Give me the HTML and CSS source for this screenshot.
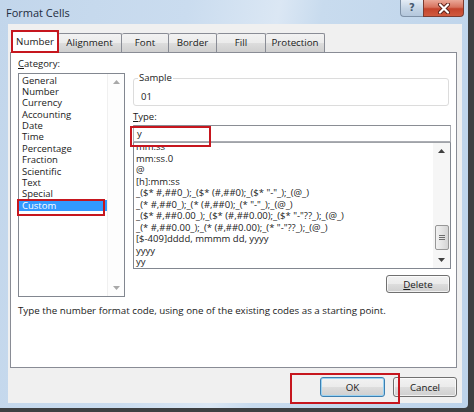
FILE: index.html
```html
<!DOCTYPE html>
<html>
<head>
<meta charset="utf-8">
<link rel="stylesheet" href="styles.css">
</head>
<body>
<div class="window">
  <div class="titlebar">
    <span class="title">Format Cells</span>
    <div class="caption-btns">
      <span class="btn-help">?</span>
      <span class="btn-close">
        <svg width="14" height="11" viewBox="0 0 14 11"><path d="M3 1.5 L11 9.5 M11 1.5 L3 9.5" stroke="#5a2018" stroke-width="4" stroke-linecap="round"/><path d="M3 1.5 L11 9.5 M11 1.5 L3 9.5" stroke="#fff" stroke-width="2.2" stroke-linecap="round"/></svg>
      </span>
    </div>
  </div>
  <div class="client">
    <div class="tabs">
      <div class="tab active w-number">Number</div>
      <div class="tab w-align">Alignment</div>
      <div class="tab w-font">Font</div>
      <div class="tab w-border">Border</div>
      <div class="tab w-fill">Fill</div>
      <div class="tab w-prot">Protection</div>
    </div>
    <div class="panel">
      <div class="cols">
        <div class="leftcol">
          <div class="label"><u>C</u>ategory:</div>
          <div class="listbox">
            <ul class="items cat">
              <li>General</li>
              <li>Number</li>
              <li>Currency</li>
              <li>Accounting</li>
              <li>Date</li>
              <li>Time</li>
              <li>Percentage</li>
              <li>Fraction</li>
              <li>Scientific</li>
              <li>Text</li>
              <li>Special</li>
              <li class="sel">Custom</li>
            </ul>
            <div class="vscroll plain">
              <svg class="arr" width="7" height="4" viewBox="0 0 7 4"><path d="M0 4 L3.5 0 L7 4Z" fill="#a8a8a8"/></svg>
              <div class="track"></div>
              <svg class="arr" width="7" height="4" viewBox="0 0 7 4"><path d="M0 0 L3.5 4 L7 0Z" fill="#a8a8a8"/></svg>
            </div>
          </div>
        </div>
        <div class="rightcol">
          <fieldset class="sample">
            <legend>Sample</legend>
            <div class="sample-val">01</div>
          </fieldset>
          <div class="label type-label"><u>T</u>ype:</div>
          <div class="typeinput">y</div>
          <div class="fmtlist">
            <ul class="items fmt">
              <li>mm:ss</li>
              <li>mm:ss.0</li>
              <li>@</li>
              <li>[h]:mm:ss</li>
              <li>_($* #,##0_);_($* (#,##0);_($* "-"_);_(@_)</li>
              <li>_(* #,##0_);_(* (#,##0);_(* "-"_);_(@_)</li>
              <li>_($* #,##0.00_);_($* (#,##0.00);_($* "-"??_);_(@_)</li>
              <li>_(* #,##0.00_);_(* (#,##0.00);_(* "-"??_);_(@_)</li>
              <li>[$-409]dddd, mmmm dd, yyyy</li>
              <li>yyyy</li>
              <li>yy</li>
            </ul>
            <div class="vscroll active">
              <svg class="arr" width="7" height="4" viewBox="0 0 7 4"><path d="M0 4 L3.5 0 L7 4Z" fill="#404040"/></svg>
              <div class="track">
                <div class="thumb"><span></span><span></span><span></span></div>
              </div>
              <svg class="arr" width="7" height="4" viewBox="0 0 7 4"><path d="M0 0 L3.5 4 L7 0Z" fill="#404040"/></svg>
            </div>
          </div>
          <div class="del-row"><button class="btn del"><u>D</u>elete</button></div>
        </div>
      </div>
      <p class="desc">Type the number format code, using one of the existing codes as a starting point.</p>
    </div>
    <div class="footer">
      <button class="btn ok">OK</button>
      <button class="btn cancel">Cancel</button>
    </div>
  </div>
  <div class="redbox rb-tab"></div>
  <div class="redbox rb-type"></div>
  <div class="redbox rb-custom"></div>
  <div class="redbox rb-ok"></div>
</div>
</body>
</html>
```

FILE: styles.css
```css
* { box-sizing: border-box; }
html, body { margin: 0; padding: 0; }
body {
  width: 474px;
  height: 412px;
  overflow: hidden;
  background: #3e4042;
  font-family: "Open Sans", "Noto Sans", sans-serif;
  font-size: 9.5px;
  color: #1a1a1a;
}
.window {
  position: relative;
  width: 468px;
  height: 408px;
  display: flex;
  flex-direction: column;
  background: linear-gradient(100deg, #c2d6eb 0%, #cadcef 35%, #dbe7f4 52%, #c8dbee 60%, #bdd3ea 100%);
  border-bottom-right-radius: 4px;
}
.titlebar {
  height: 24px;
  display: flex;
  align-items: flex-start;
  flex: none;
}
.title {
  padding: 5px 0 0 6px;
  font-size: 11px;
  color: #1e2d40;
}
.caption-btns {
  margin-left: auto;
  margin-right: 4px;
  display: flex;
}
.btn-help {
  width: 23px;
  height: 17px;
  border: 1px solid #7f92a8;
  border-top: none;
  border-right: none;
  border-bottom-left-radius: 4px;
  background: linear-gradient(#e4ecf5, #c3d3e4 55%, #b4c7dc);
  color: #45586e;
  font-family: "DejaVu Sans", sans-serif;
  font-size: 10px;
  font-weight: bold;
  text-align: center;
  line-height: 15px;
}
.btn-close {
  width: 41px;
  height: 17px;
  border: 1px solid #7b3b30;
  border-top: none;
  border-bottom-right-radius: 4px;
  background: linear-gradient(#eaa898, #d7735e 45%, #c4442c 55%, #d05a3e);
  display: flex;
  align-items: center;
  justify-content: center;
}
.client {
  flex: 1;
  margin: 0 6px 5px 8px;
  background: #f0f0f0;
  display: flex;
  flex-direction: column;
}
.tabs {
  display: flex;
  align-items: flex-end;
  margin: 7px 0 0 4px;
  height: 22px;
  position: relative;
  z-index: 2;
}
.tab {
  height: 19px;
  margin-bottom: 1px;
  border: 1px solid #898c95;
  border-bottom: none;
  border-left: none;
  background: linear-gradient(#f2f2f2, #ebebeb 50%, #dddddd 51%, #cfcfcf);
  text-align: center;
  line-height: 18px;
  font-size: 9.75px;
  border-radius: 2px 2px 0 0;
}
.tab.active {
  height: 22px;
  margin-bottom: 0;
  background: #fff;
  border-left: 1px solid #898c95;
  line-height: 20px;
}
.w-number { width: 46px; }
.w-align { width: 64px; border-left: none; }
.w-font { width: 47px; }
.w-border { width: 48px; }
.w-fill { width: 49px; }
.w-prot { width: 59px; }
.panel {
  margin-left: 2px;
  width: 447px;
  height: 316px;
  margin-top: -1px;
  background: #fff;
  border: 1px solid #898c95;
  padding: 5px 0 0 7px;
  display: flex;
  flex-direction: column;
  position: relative;
  z-index: 1;
}
.cols {
  display: flex;
  gap: 8px;
}
.leftcol { width: 107px; }
.label {
  height: 12px;
  line-height: 12px;
  margin-bottom: 3px;
}
.listbox {
  height: 224px;
  border: 1px solid #828790;
  display: flex;
  overflow: hidden;
}
.items {
  list-style: none;
  margin: 0;
  padding: 0;
  flex: 1;
  min-width: 0;
  overflow: hidden;
}
.items li {
  height: 11.4px;
  line-height: 11.4px;
  white-space: nowrap;
}
.cat { padding-top: 0.5px; }
.cat li { padding-left: 3px; }
.cat li.sel { background: #3399ff; color: #fff; }
.vscroll {
  width: 17px;
  flex: none;
  display: flex;
  flex-direction: column;
  align-items: center;
  background: #f6f6f6;
}
.vscroll.plain { background: #fdfdfd; border-left: 1px solid #f0f0f0; }
.vscroll .arr { margin: 6px 0; flex: none; }
.vscroll .track { flex: 1; width: 100%; display: flex; flex-direction: column; justify-content: flex-end; padding-bottom: 1px; }
.thumb {
  margin: 0 1px 0 2px;
  height: 25px;
  border: 1px solid #979797;
  border-radius: 2px;
  background: linear-gradient(90deg, #f2f2f2, #e4e4e4 50%, #d4d4d4);
  display: flex;
  flex-direction: column;
  align-items: center;
  justify-content: center;
  gap: 1px;
}
.thumb span { width: 6px; height: 1px; background: #6e6e6e; }
.rightcol { width: 318px; }
.sample {
  margin: 14px 2px 0 0;
  padding: 0 0 0 4px;
  border: 1px solid #dcdcdc;
  border-radius: 3px;
  height: 34px;
  min-width: 0;
}
.sample legend {
  padding: 0 1px;
  line-height: 12px;
}
.sample-val {
  margin-top: 7px;
  padding-left: 3px;
  line-height: 12px;
}
.type-label { margin-top: 5px; margin-bottom: 2px; }
.typeinput {
  height: 17px;
  border: 1px solid #abadb3;
  border-top-color: #8a8d94;
  padding-left: 3px;
  line-height: 15px;
}
.fmtlist {
  height: 127px;
  border: 1px solid #828790;
  border-top-color: #a0a3a8;
  display: flex;
  overflow: hidden;
}
.fmt { padding-top: 0; margin-top: -2px; }
.fmt li { height: 11.5px; line-height: 11.5px; padding-left: 2px; }
.fmtlist .vscroll .track { padding-bottom: 2px; }
.del-row {
  display: flex;
  justify-content: flex-end;
  margin-top: 6px;
  padding-right: 1px;
}
.btn {
  font-family: inherit;
  font-size: 9.75px;
  color: #1a1a1a;
  border: 1px solid #707070;
  border-radius: 3px;
  background: linear-gradient(#f2f2f2, #ebebeb 50%, #dddddd 51%, #cfcfcf);
  padding: 0;
  box-shadow: inset 0 0 0 1px rgba(255,255,255,0.7);
}
.del { width: 64px; height: 18px; }
.desc {
  margin: 8px 0 0 0;
  line-height: 12px;
  font-size: 9.75px;
}
.footer {
  display: flex;
  justify-content: flex-end;
  gap: 8px;
  margin-top: 9px;
  padding-right: 5px;
}
.ok { width: 65px; height: 20px; border-color: #3c7fb1; box-shadow: inset 0 0 0 1px #9bd3f2; }
.cancel { width: 64px; height: 20px; }
.redbox {
  position: absolute;
  border: 2px solid #c6161e;
  z-index: 5;
}
.rb-tab { left: 11px; top: 30px; width: 48px; height: 23px; }
.rb-type { left: 130px; top: 126px; width: 81px; height: 21px; }
.rb-custom { left: 17px; top: 199px; width: 88px; height: 17px; }
.rb-ok { left: 290px; top: 373px; width: 110px; height: 31px; }
```
